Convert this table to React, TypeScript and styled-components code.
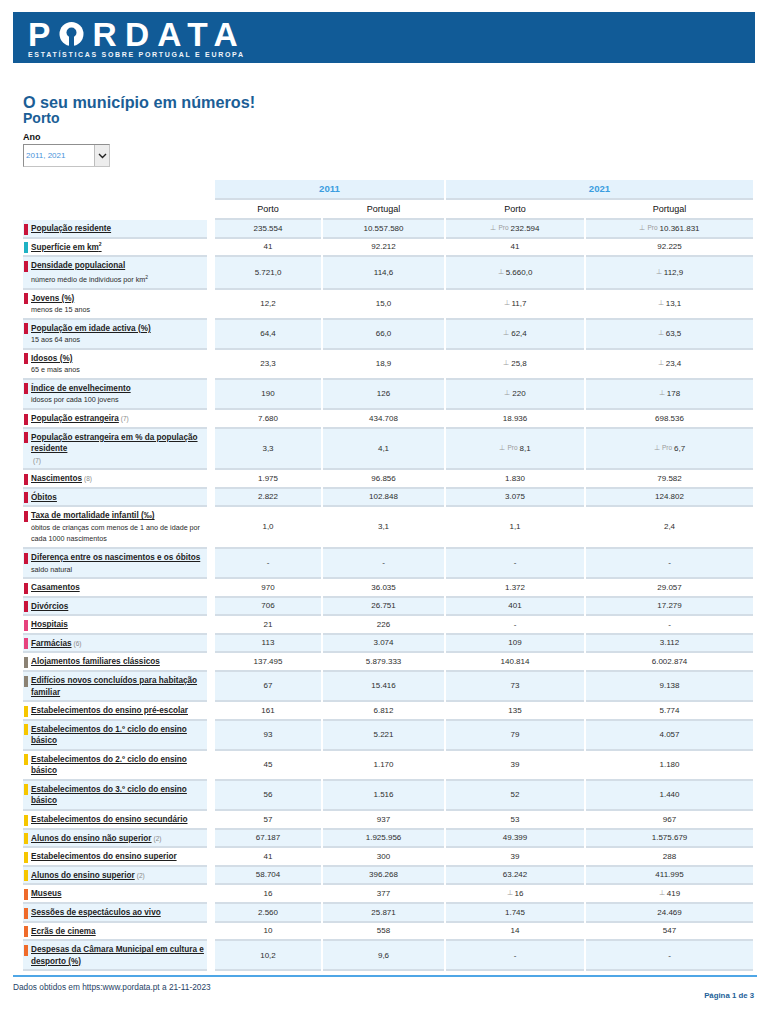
import React from "react";
import styled, { createGlobalStyle } from "styled-components";

const GlobalStyle = createGlobalStyle`
  html, body {
    margin: 0;
    padding: 0;
    background: #fff;
  }
  body {
    font-family: "Liberation Sans", Arial, sans-serif;
    color: #222;
  }
`;

const Page = styled.div`
  width: 768px;
  box-sizing: border-box;
  padding: 12px 13px 20px;
`;

/* ---------- banner ---------- */

const Banner = styled.header`
  height: 51px;
  background: #115b97;
  box-sizing: border-box;
  padding: 6px 0 0 15px;
  color: #fff;
`;

const Word = styled.div`
  font: bold 33.5px/33px "Liberation Sans", Arial, sans-serif;
  letter-spacing: 8.2px;
  white-space: nowrap;
`;

const KeyO = styled.svg`
  width: 25px;
  height: 24px;
  margin-right: 9px;
  vertical-align: baseline;
`;

const Tagline = styled.div`
  font: bold 7px/8px "Liberation Sans", Arial, sans-serif;
  letter-spacing: 1.7px;
  white-space: nowrap;
  color: #eef4fa;
`;

/* ---------- intro ---------- */

const Intro = styled.section`
  padding: 31px 0 0 10px;
`;

const Title = styled.h1`
  margin: 0;
  font: bold 16.2px/16px "Liberation Sans", Arial, sans-serif;
  color: #1b5e96;
`;

const Place = styled.h2`
  margin: 0;
  font: bold 14px/16px "Liberation Sans", Arial, sans-serif;
  color: #1b5e96;
`;

const FieldLabel = styled.div`
  margin-top: 6px;
  font: bold 9px/11px "Liberation Sans", Arial, sans-serif;
  color: #111;
`;

const Select = styled.div`
  margin-top: 1px;
  width: 87px;
  height: 23px;
  box-sizing: border-box;
  border: 1px solid #8f8f8f;
  border-right-color: #c4c4c4;
  border-bottom-color: #c4c4c4;
  display: flex;
  align-items: stretch;
  background: #fff;
`;

const SelectValue = styled.span`
  flex: 1;
  padding-left: 2px;
  display: flex;
  align-items: center;
  font: 8px/10px "Liberation Sans", Arial, sans-serif;
  color: #4a94da;
`;

const SelectArrow = styled.span`
  width: 14px;
  background: #ededed;
  border-left: 1px solid #bdbdbd;
  display: flex;
  align-items: center;
  justify-content: center;
`;

/* ---------- table ---------- */

const Grid = styled.div`
  display: grid;
  grid-template-columns: 190px 106px 121px 138px 167px;
  column-gap: 2px;
  width: 730px;
  margin: 13px 0 0 10px;
`;

const RowGroup = styled.div`
  display: contents;
`;

const Blank = styled.div`
  margin-right: 6px;
`;

const YearHead = styled.div`
  grid-column: span 2;
  background: #e4f2fc;
  border-bottom: 2px solid #d3dde6;
  height: 18px;
  display: flex;
  align-items: center;
  justify-content: center;
  font: bold 9.6px/12px "Liberation Sans", Arial, sans-serif;
  color: #3a9de0;
`;

const SubHead = styled.div`
  border-bottom: 2px solid #d3dde6;
  height: 18px;
  display: flex;
  align-items: center;
  justify-content: center;
  font: 9px/12px "Liberation Sans", Arial, sans-serif;
  color: #111;
`;

const LabelCell = styled.div<{ $shade: boolean }>`
  margin-right: 6px;
  background: ${(p) => (p.$shade ? "#e8f4fc" : "#fff")};
  border-bottom: 2px solid #d3dde6;
  padding: 3px 2px 2.1px 1px;
  display: flex;
  align-items: flex-start;
  gap: 3px;
`;

const Marker = styled.span<{ $color: string }>`
  flex: none;
  width: 4px;
  height: 11px;
  margin-top: 0.5px;
  background: ${(p) => p.$color};
`;

const LabelText = styled.div`
  flex: 1;
  min-width: 0;
`;

const Name = styled.div`
  font: bold 8.2px/11.5px "Liberation Sans", Arial, sans-serif;
  color: #1e1e1e;
`;

const Link = styled.span`
  text-decoration: underline;
  text-underline-offset: 1px;
`;

const Note = styled.span`
  margin-left: 2px;
  font: 6.5px/11.5px "Liberation Sans", Arial, sans-serif;
  color: #8a8a8a;
`;

const NoteLine = styled.div`
  padding-left: 2px;
  font: 6.5px/11.5px "Liberation Sans", Arial, sans-serif;
  color: #8a8a8a;
`;

const Sub = styled.div`
  font: 7.2px/11.5px "Liberation Sans", Arial, sans-serif;
  color: #2a2a2a;
  sup {
    font-size: 5px;
  }
`;

const ValueCell = styled.div<{ $shade: boolean }>`
  background: ${(p) => (p.$shade ? "#e8f4fc" : "#fff")};
  border-bottom: 2px solid #d3dde6;
  display: flex;
  align-items: center;
  justify-content: center;
  gap: 2px;
  font: 8px/11.5px "Liberation Sans", Arial, sans-serif;
  color: #2e2e2e;
`;

const Flag = styled.span`
  font-size: 6.5px;
  color: #9a9a9a;
  position: relative;
  top: -1px;
`;

const Footer = styled.footer`
  margin: 4px -2px 0 0;
  border-top: 2px solid #4ea6e6;
  padding-top: 5px;
  display: flex;
  justify-content: space-between;
  align-items: flex-start;
`;

const Source = styled.span`
  font: 8.3px/10px "Liberation Sans", Arial, sans-serif;
  color: #1f3f66;
`;

const PageNo = styled.span`
  margin: 9px 3px 0 0;
  font: bold 7.8px/10px "Liberation Sans", Arial, sans-serif;
  color: #1d5f99;
`;

/* ---------- data ---------- */

const RED = "#c8133a";
const TEAL = "#1fb2c4";
const PINK = "#e6427e";
const GREY = "#8b8274";
const YELLOW = "#f6c600";
const ORANGE = "#ef6b2b";

interface Row {
  name: React.ReactNode;
  note?: string;
  noteBelow?: boolean;
  sub?: React.ReactNode;
  color: string;
  values: string[];
}

// "!" = quebra de série, "!p" = quebra de série + provisório
const rows: Row[] = [
  { name: "População residente", color: RED, values: ["235.554", "10.557.580", "!p232.594", "!p10.361.831"] },
  { name: <>Superfície em km<sup style={{ fontSize: "5px", lineHeight: 0 }}>2</sup></>, color: TEAL, values: ["41", "92.212", "41", "92.225"] },
  {
    name: "Densidade populacional",
    sub: <>número médio de indivíduos por km<sup>2</sup></>,
    color: RED,
    values: ["5.721,0", "114,6", "!5.660,0", "!112,9"],
  },
  { name: "Jovens (%)", sub: "menos de 15 anos", color: RED, values: ["12,2", "15,0", "!11,7", "!13,1"] },
  { name: "População em idade activa (%)", sub: "15 aos 64 anos", color: RED, values: ["64,4", "66,0", "!62,4", "!63,5"] },
  { name: "Idosos (%)", sub: "65 e mais anos", color: RED, values: ["23,3", "18,9", "!25,8", "!23,4"] },
  { name: "Índice de envelhecimento", sub: "idosos por cada 100 jovens", color: RED, values: ["190", "126", "!220", "!178"] },
  { name: "População estrangeira", note: "(7)", color: RED, values: ["7.680", "434.708", "18.936", "698.536"] },
  {
    name: "População estrangeira em % da população residente",
    note: "(7)",
    noteBelow: true,
    color: RED,
    values: ["3,3", "4,1", "!p8,1", "!p6,7"],
  },
  { name: "Nascimentos", note: "(8)", color: RED, values: ["1.975", "96.856", "1.830", "79.582"] },
  { name: "Óbitos", color: RED, values: ["2.822", "102.848", "3.075", "124.802"] },
  {
    name: "Taxa de mortalidade infantil (‰)",
    sub: "óbitos de crianças com menos de 1 ano de idade por cada 1000 nascimentos",
    color: RED,
    values: ["1,0", "3,1", "1,1", "2,4"],
  },
  { name: "Diferença entre os nascimentos e os óbitos", sub: "saldo natural", color: RED, values: ["-", "-", "-", "-"] },
  { name: "Casamentos", color: RED, values: ["970", "36.035", "1.372", "29.057"] },
  { name: "Divórcios", color: RED, values: ["706", "26.751", "401", "17.279"] },
  { name: "Hospitais", color: PINK, values: ["21", "226", "-", "-"] },
  { name: "Farmácias", note: "(6)", color: PINK, values: ["113", "3.074", "109", "3.112"] },
  { name: "Alojamentos familiares clássicos", color: GREY, values: ["137.495", "5.879.333", "140.814", "6.002.874"] },
  { name: "Edifícios novos concluídos para habitação familiar", color: GREY, values: ["67", "15.416", "73", "9.138"] },
  { name: "Estabelecimentos do ensino pré-escolar", color: YELLOW, values: ["161", "6.812", "135", "5.774"] },
  { name: "Estabelecimentos do 1.º ciclo do ensino básico", color: YELLOW, values: ["93", "5.221", "79", "4.057"] },
  { name: "Estabelecimentos do 2.º ciclo do ensino básico", color: YELLOW, values: ["45", "1.170", "39", "1.180"] },
  { name: "Estabelecimentos do 3.º ciclo do ensino básico", color: YELLOW, values: ["56", "1.516", "52", "1.440"] },
  { name: "Estabelecimentos do ensino secundário", color: YELLOW, values: ["57", "937", "53", "967"] },
  { name: "Alunos do ensino não superior", note: "(2)", color: YELLOW, values: ["67.187", "1.925.956", "49.399", "1.575.679"] },
  { name: "Estabelecimentos do ensino superior", color: YELLOW, values: ["41", "300", "39", "288"] },
  { name: "Alunos do ensino superior", note: "(2)", color: YELLOW, values: ["58.704", "396.268", "63.242", "411.995"] },
  { name: "Museus", color: ORANGE, values: ["16", "377", "!16", "!419"] },
  { name: "Sessões de espectáculos ao vivo", color: ORANGE, values: ["2.560", "25.871", "1.745", "24.469"] },
  { name: "Ecrãs de cinema", color: ORANGE, values: ["10", "558", "14", "547"] },
  { name: "Despesas da Câmara Municipal em cultura e desporto (%)", color: ORANGE, values: ["10,2", "9,6", "-", "-"] },
];

const Value: React.FC<{ raw: string }> = ({ raw }) => {
  let text = raw;
  let brk = false;
  let pro = false;
  if (text.startsWith("!p")) {
    brk = true;
    pro = true;
    text = text.slice(2);
  } else if (text.startsWith("!")) {
    brk = true;
    text = text.slice(1);
  }
  return (
    <>
      {brk && <Flag>⊥</Flag>}
      {pro && <Flag>Pro</Flag>}
      <span>{text}</span>
    </>
  );
};

const LogoO = () => (
  <KeyO viewBox="0 0 25 24">
    <defs>
      <mask id="keyhole">
        <rect width="25" height="24" fill="#fff" />
        <circle cx="12.5" cy="10.5" r="5" fill="#000" />
        <rect x="10" y="11" width="5" height="14" fill="#000" />
      </mask>
    </defs>
    <circle cx="12.5" cy="12" r="12" fill="#fff" mask="url(#keyhole)" />
  </KeyO>
);

export default function App() {
  return (
    <>
      <GlobalStyle />
      <Page>
        <Banner>
          <Word>
            P<LogoO />RDATA
          </Word>
          <Tagline>ESTATÍSTICAS SOBRE PORTUGAL E EUROPA</Tagline>
        </Banner>

        <Intro>
          <Title>O seu município em números!</Title>
          <Place>Porto</Place>
          <FieldLabel>Ano</FieldLabel>
          <Select>
            <SelectValue>2011, 2021</SelectValue>
            <SelectArrow>
              <svg width="9" height="6" viewBox="0 0 9 6">
                <polyline points="1,1 4.5,4.5 8,1" fill="none" stroke="#222" strokeWidth="1.4" />
              </svg>
            </SelectArrow>
          </Select>
        </Intro>

        <Grid>
          <RowGroup>
            <Blank />
            <YearHead>2011</YearHead>
            <YearHead>2021</YearHead>
          </RowGroup>
          <RowGroup>
            <Blank />
            <SubHead>Porto</SubHead>
            <SubHead>Portugal</SubHead>
            <SubHead>Porto</SubHead>
            <SubHead>Portugal</SubHead>
          </RowGroup>
          {rows.map((r, i) => {
            const shade = i % 2 === 0;
            return (
              <RowGroup key={i}>
                <LabelCell $shade={shade}>
                  <Marker $color={r.color} />
                  <LabelText>
                    <Name>
                      <Link>{r.name}</Link>
                      {r.note && !r.noteBelow && <Note>{r.note}</Note>}
                    </Name>
                    {r.note && r.noteBelow && <NoteLine>{r.note}</NoteLine>}
                    {r.sub && <Sub>{r.sub}</Sub>}
                  </LabelText>
                </LabelCell>
                {r.values.map((v, j) => (
                  <ValueCell key={j} $shade={shade}>
                    <Value raw={v} />
                  </ValueCell>
                ))}
              </RowGroup>
            );
          })}
        </Grid>

        <Footer>
          <Source>Dados obtidos em https:www.pordata.pt a 21-11-2023</Source>
          <PageNo>Página 1 de 3</PageNo>
        </Footer>
      </Page>
    </>
  );
}
